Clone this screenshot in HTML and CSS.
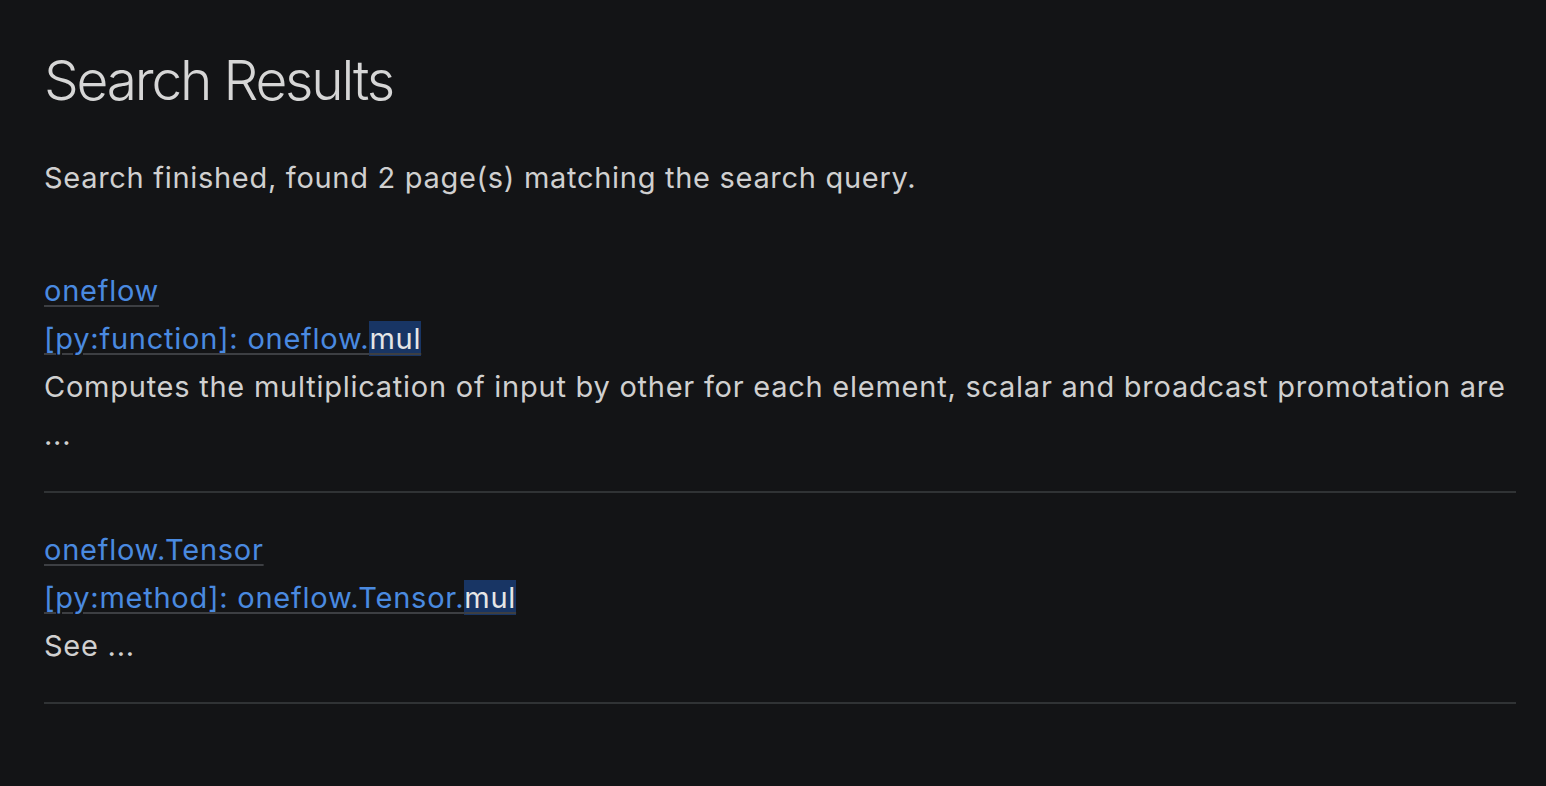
FILE: index.html
```html
<!DOCTYPE html>
<html lang="en">
<head>
    <meta charset="UTF-8">
    <meta name="viewport" content="width=device-width, initial-scale=1.0">
    <title>Search - OneFlow documentation</title>
    <link rel="stylesheet" href="styles.css">
</head>
<body>
    <div class="content">
        <h1>Search Results</h1>
        <p class="search-summary">Search finished, found 2 page(s) matching the search query.</p>

        <ul class="search">
            <li>
                <a href="#" class="result-title">oneflow</a>
                <a href="#" class="result-link">[py:function]: oneflow.<span class="highlighted">mul</span></a>
                <p class="context">Computes the multiplication of input by other for each element, scalar and broadcast promotation are ...</p>
            </li>
            <li>
                <a href="#" class="result-title">oneflow.Tensor</a>
                <a href="#" class="result-link">[py:method]: oneflow.Tensor.<span class="highlighted">mul</span></a>
                <p class="context">See ...</p>
            </li>
        </ul>
    </div>
</body>
</html>
```

FILE: styles.css
```css
* { box-sizing: border-box; }

body {
    font-family: Inter, 'Noto Sans', sans-serif;
    margin: 0;
    background: #131416;
    color: #d0d0d0;
}

.content {
    padding: 44px 30px 0 44px;
}

h1 {
    font-size: 55px;
    font-weight: 300;
    line-height: 72px;
    letter-spacing: -2.2px;
    margin: 0;
    color: #d6d6d6;
}

.search-summary {
    font-size: 29px;
    line-height: 48px;
    letter-spacing: 0.7px;
    margin: 38px 0 0;
}

/* 검색 결과 목록 */
.search {
    list-style: none;
    margin: 33px 0 0;
    padding: 0;
}

.search li {
    padding: 32px 0;
    border-bottom: 2px solid #303335;
    font-size: 29px;
    line-height: 48px;
    letter-spacing: 0.75px;
}

.search li + li {
    padding-top: 33px;
}

.search a {
    display: table;
    color: #4a8ae0;
    text-decoration: underline;
    text-decoration-color: #3d3f43;
    text-decoration-thickness: 2px;
    text-underline-offset: 4px;
}

.highlighted {
    background: #183564;
    color: #e6e6e6;
}

.context {
    margin: 0;
}
```
